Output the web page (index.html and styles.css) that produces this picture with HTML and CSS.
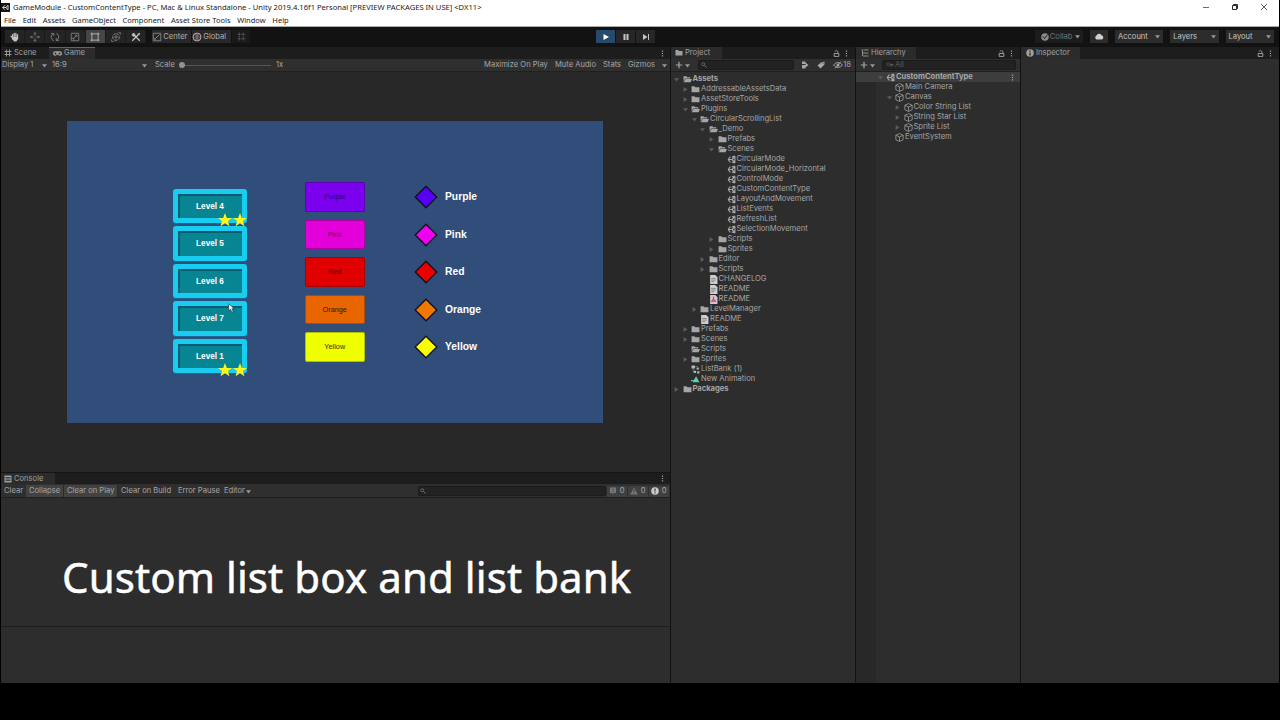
FILE: index.html
```html
<!DOCTYPE html>
<html lang="en">
<head>
  <meta charset="UTF-8" />
  <title>GameModule - CustomContentType</title>
  <link rel="stylesheet" href="styles.css">
</head>
<body>

  <!-- icons -->
  <svg class="defs" width="0" height="0">
    <symbol id="i-folder" viewBox="0 0 16 16"><path d="M1 2h5l2 2h7v9H1z" fill="currentColor"/></symbol>
    <symbol id="i-open" viewBox="0 0 16 16"><path d="M1 11V2h5l1.500 2H13v2H4z M4.500 7H16l-2.500 6H1z" fill="currentColor"/></symbol>
    <symbol id="i-scene" viewBox="0 0 16 16"><path d="M14 2v12M14 2L8.500 3.500M14 14l-5.500-1.500M2 8l4-5M2 8l4 5M2 8h7M9 8l4.500-5M9 8l4.500 5" fill="none" stroke="currentColor" stroke-width="2"/></symbol>
    <symbol id="i-doc" viewBox="0 0 16 16"><path d="M2 0h9l4 4v12H2z" fill="#cfcfcf"/><path d="M4 6h8M4 9h8M4 12h5" stroke="#666" stroke-width="1.200"/></symbol>
    <symbol id="i-pdf" viewBox="0 0 16 16"><path d="M2 0h9l4 4v12H2z" fill="#d8c4ca"/><path d="M8 3v4l-4 5M8 7l4 4H5" fill="none" stroke="#b02548" stroke-width="1.600"/></symbol>
    <symbol id="i-list" viewBox="0 0 16 16"><path d="M1 1h6v5H1zM10 5h4v3h-4zM5 10h4v4H5zM11 11h4v4h-4z" fill="#b8b8b8"/><path d="M4 6v6h3M7 3h5v3" fill="none" stroke="#6fb7a4"/></symbol>
    <symbol id="i-anim" viewBox="0 0 16 16"><path d="M9 2l6 11H3z" fill="#55d6a8"/><path d="M0 10h6" stroke="#55d6a8" stroke-width="2"/></symbol>
    <symbol id="i-cube" viewBox="0 0 16 16"><path d="M8 1l6.500 3v8L8 15l-6.500-3V4zM1.500 4L8 7l6.500-3M8 7v8" fill="none" stroke="currentColor" stroke-width="1.300"/></symbol>
    <symbol id="i-down" viewBox="0 0 8 8"><path d="M0 2h8L4 7z" fill="currentColor"/></symbol>
    <symbol id="i-right" viewBox="0 0 8 8"><path d="M1 0v8l6-4z" fill="currentColor"/></symbol>
    <symbol id="i-lock" viewBox="0 0 12 12"><path d="M3 2.500Q6-.5 8.500 2.500V6" fill="none" stroke="currentColor" stroke-width="1.400"/><path d="M2 6h8v5H2z" fill="none" stroke="currentColor" stroke-width="1.600"/></symbol>
    <symbol id="i-dots" viewBox="0 0 4 12"><path d="M1 1h2v2H1zM1 5h2v2H1zM1 9h2v2H1z" fill="currentColor"/></symbol>
    <symbol id="i-search" viewBox="0 0 12 12"><circle cx="4.500" cy="4.500" r="3" fill="none" stroke="currentColor" stroke-width="1.500"/><path d="M7 7l4 4" stroke="currentColor" stroke-width="2"/></symbol>
    <symbol id="i-plus" viewBox="0 0 10 10"><path d="M5 1v8M1 5h8" stroke="currentColor" stroke-width="1.500"/></symbol>
    <symbol id="i-star" viewBox="0 0 20 20"><path d="M10 0l2.600 7H20l-5.800 4.600L16.300 19 10 14.600 3.700 19l2.100-7.400L0 7h7.400z" fill="#fff51c"/></symbol>
    <symbol id="i-diamond" viewBox="0 0 24 24"><path d="M12 1.200L22.800 12 12 22.800 1.200 12z" fill="currentColor" stroke="#10101c" stroke-width="1.300"/></symbol>
  </svg>

  <div class="window">
    <div class="titlebar">
      <svg class="unity" viewBox="0 0 16 16"><path d="M0 0h16v16H0z" fill="#151515"/><path d="M3 8l4-4M3 8l4 4M3 8h6M9 8l3-4M9 8l3 4M12.500 4v8" stroke="#fff" stroke-width="1.400"/></svg>
      <span class="title">GameModule - CustomContentType - PC, Mac &amp; Linux Standalone - Unity 2019.4.16f1 Personal [PREVIEW PACKAGES IN USE] &lt;DX11&gt;</span>
      <div class="controls">
        <svg viewBox="0 0 8 8"><path d="M1 4.500h6" stroke="#444" stroke-width=".8"/></svg>
        <svg viewBox="0 0 8 8"><path d="M1.500 2.500h4v4h-4zM2.500 2V1.500h4v4H6" fill="none" stroke="#111" stroke-width=".9"/></svg>
        <svg viewBox="0 0 8 8"><path d="M1 1l6 6M7 1L1 7" stroke="#333" stroke-width=".8"/></svg>
      </div>
    </div>
    <div class="menubar">
      <span>File</span><span>Edit</span><span>Assets</span><span>GameObject</span><span>Component</span><span>Asset Store Tools</span><span>Window</span><span>Help</span>
    </div>

    <div class="toolbar">
      <div class="tools">
        <span class="tool"><svg viewBox="0 0 16 16"><path d="M4 9V4M6.700 8V2M9.400 8V2M12 9V4M4 9L1.500 7" stroke="currentColor" stroke-width="2" stroke-linecap="round"/><path d="M3 8h10v3l-3 4H7l-4-4z" fill="currentColor"/></svg></span>
        <span class="tool dim"><svg viewBox="0 0 16 16"><path d="M8 1v5M8 10v5M1 8h5M10 8h5M6 3l2-2 2 2M6 13l2 2 2-2M3 6L1 8l2 2M13 6l2 2-2 2" fill="none" stroke="currentColor" stroke-width="1.300"/></svg></span>
        <span class="tool dim"><svg viewBox="0 0 16 16"><path d="M6 14A6.500 6.500 0 0 1 5 2.500M10 2A6.500 6.500 0 0 1 11 13.500M2 2.500h4v4M14 13.500h-4v-4" fill="none" stroke="currentColor" stroke-width="1.400"/></svg></span>
        <span class="tool dim"><svg viewBox="0 0 16 16"><path d="M2 2h12v12H2zM5 11l6-6M8 5h3v3M2 10h4v4" fill="none" stroke="currentColor" stroke-width="1.300"/></svg></span>
        <span class="tool on"><svg viewBox="0 0 16 16"><path d="M3 1v14M13 1v14M1 3h14M1 13h14" fill="none" stroke="currentColor" stroke-width="1.300"/></svg></span>
        <span class="tool dim"><svg viewBox="0 0 16 16"><circle cx="8" cy="8" r="5.500" fill="none" stroke="currentColor" stroke-width="1.500" stroke-dasharray="5 1.500"/><path d="M8 4v8M4 8h8M12 1h3v3M1 12v3h3" fill="none" stroke="currentColor" stroke-width="1.300"/></svg></span>
        <span class="tool"><svg viewBox="0 0 16 16"><path d="M2 14L14 2M5 5l9 9" stroke="currentColor" stroke-width="2"/><path d="M2 3l3-1 2 3-2 2-3-1zM11 2l3 3" fill="currentColor" stroke="currentColor"/></svg></span>
      </div>
      <div class="pivots">
        <span class="pivot"><svg viewBox="0 0 16 16"><path d="M2 2h12v12H2zM4 12l8-8" fill="none" stroke="#999" stroke-width="1.200"/><circle cx="5" cy="11" r="1.500" fill="#c56"/></svg>Center</span>
        <span class="pivot"><svg viewBox="0 0 16 16"><circle cx="8" cy="8" r="6.300" fill="none" stroke="#bbb" stroke-width="1.500"/><path d="M8 2v12M2 8h12M4 4q4 3 8 0M4 12q4-3 8 0" fill="none" stroke="#a88" stroke-width="1.200"/></svg>Global</span>
        <span class="snap"><svg viewBox="0 0 16 16"><path d="M4 1v14M11 1v14M1 4h14M1 12h14" fill="none" stroke="#777" stroke-width="1.300" stroke-dasharray="2 1"/></svg></span>
      </div>
      <div class="play">
        <span class="active"><svg viewBox="0 0 16 16"><path d="M3 2l11 6-11 6z" fill="#fff"/></svg></span>
        <span><svg viewBox="0 0 16 16"><path d="M3 2h4v12H3zM9 2h4v12H9z" fill="currentColor"/></svg></span>
        <span><svg viewBox="0 0 16 16"><path d="M2 2l9 6-9 6zM12 2h2v12h-2z" fill="currentColor"/></svg></span>
      </div>
      <div class="account">
        <span class="drop collab"><svg class="check" viewBox="0 0 16 16"><circle cx="8" cy="8" r="7.500" fill="#8b8b8b"/><path d="M4 7l3 4 6-8" fill="none" stroke="#222" stroke-width="2"/></svg>Collab<svg class="caret"><use href="#i-down"/></svg></span>
        <span class="drop cloud"><svg viewBox="0 0 20 14"><path d="M5 13a4.500 4.500 0 0 1 0-8 5.500 5.500 0 0 1 10-.5 4.300 4.300 0 0 1 0 8.500z" fill="#d0d0d0"/></svg></span>
        <span class="drop">Account<svg class="caret"><use href="#i-down"/></svg></span>
        <span class="drop">Layers<svg class="caret"><use href="#i-down"/></svg></span>
        <span class="drop">Layout<svg class="caret"><use href="#i-down"/></svg></span>
      </div>
    </div>

    <div class="panels">
      <div class="left">
        <div class="tabs">
          <span class="tab idle"><svg viewBox="0 0 16 16"><path d="M5 1v14M11 1v14M1 5h14M1 11h14" stroke="currentColor" stroke-width="1.800"/></svg>Scene</span>
          <span class="tab game-tab"><svg class="pad" viewBox="0 0 20 14"><path d="M5 2h10a5 5 0 0 1 0 10q-2 0-3-2H8q-1 2-3 2A5 5 0 0 1 5 2z" fill="currentColor"/><circle cx="5.500" cy="7" r="2" fill="#222"/><circle cx="14.500" cy="7" r="2" fill="#222"/></svg>Game</span>
          <span class="tab-icons"><svg class="dots"><use href="#i-dots"/></svg></span>
        </div>
        <div class="bar game-bar">
          <span class="display">Display 1<svg class="caret"><use href="#i-down"/></svg></span>
          <span class="ratio">16:9<svg class="caret"><use href="#i-down"/></svg></span>
          <span class="scale">Scale</span>
          <span class="slider"><i></i></span>
          <span>1x</span>
          <div class="game-opts">
            <span>Maximize On Play</span><span>Mute Audio</span><span>Stats</span><span>Gizmos</span><svg class="caret"><use href="#i-down"/></svg>
          </div>
        </div>
        <div class="game">
          <div class="view">
            <div class="levels">
              <div class="level">Level 4<div class="stars"><svg><use href="#i-star"/></svg><svg><use href="#i-star"/></svg></div></div>
              <div class="level">Level 5</div>
              <div class="level">Level 6</div>
              <div class="level">Level 7
                <svg class="cursor" viewBox="0 0 10 14"><path d="M1 1v10l2.500-2.300L5.500 13l2-1-2-4H9z" fill="#fff" stroke="#123" stroke-width=".8"/></svg>
              </div>
              <div class="level">Level 1<div class="stars"><svg><use href="#i-star"/></svg><svg><use href="#i-star"/></svg></div></div>
            </div>
            <div class="colors">
              <div class="box purple">Purple</div>
              <div class="box pink">Pink</div>
              <div class="box red">Red</div>
              <div class="box orange">Orange</div>
              <div class="box yellow">Yellow</div>
            </div>
            <div class="sprites">
              <div class="sprite"><svg class="c-purple"><use href="#i-diamond"/></svg>Purple</div>
              <div class="sprite"><svg class="c-pink"><use href="#i-diamond"/></svg>Pink</div>
              <div class="sprite"><svg class="c-red"><use href="#i-diamond"/></svg>Red</div>
              <div class="sprite"><svg class="c-orange"><use href="#i-diamond"/></svg>Orange</div>
              <div class="sprite"><svg class="c-yellow"><use href="#i-diamond"/></svg>Yellow</div>
            </div>
          </div>
        </div>
        <div class="tabs console-tabs">
          <span class="tab console-tab"><svg viewBox="0 0 16 16"><path d="M1 1h14v14H1z" fill="currentColor"/><path d="M3 5h10M3 8h10M3 11h10" stroke="#222" stroke-width="1.500"/></svg>Console</span>
          <span class="tab-icons"><svg class="dots"><use href="#i-dots"/></svg></span>
        </div>
        <div class="bar console-bar">
          <span class="cb clear">Clear</span><span class="cb on collapse">Collapse</span><span class="cb on cplay">Clear on Play</span><span class="cb cbuild">Clear on Build</span><span class="cb pause">Error Pause</span><span class="cb editor">Editor<svg class="caret"><use href="#i-down"/></svg></span>
          <div class="search console-search"><svg><use href="#i-search"/></svg></div>
          <span class="count"><svg viewBox="0 0 16 16"><path d="M2 1h12v11H9l-3 3v-3H2z" fill="#777"/><path d="M8 3v4M8 8.500v2" stroke="#444" stroke-width="2"/></svg>0</span>
          <span class="count"><svg viewBox="0 0 16 16"><path d="M8 1l7.500 14H.5z" fill="#777"/><path d="M8 5v5M8 11.500v2" stroke="#444" stroke-width="2"/></svg>0</span>
          <span class="count lit"><svg viewBox="0 0 16 16"><circle cx="8" cy="8" r="7.500" fill="#ccc"/><path d="M8 3v6M8 10.500v2.500" stroke="#333" stroke-width="2.200"/></svg>0</span>
        </div>
        <div class="console">
          <div class="caption">Custom list box and list bank</div>
        </div>
        <div class="detail"></div>
      </div>

      <div class="project">
        <div class="tabs">
          <span class="tab project-tab"><svg><use href="#i-folder"/></svg>Project</span>
          <span class="tab-icons"><svg class="lock"><use href="#i-lock"/></svg><svg class="dots"><use href="#i-dots"/></svg></span>
        </div>
        <div class="bar">
          <svg class="plus"><use href="#i-plus"/></svg><svg class="caret"><use href="#i-down"/></svg>
          <div class="search project-search"><svg><use href="#i-search"/></svg></div>
          <div class="filters">
            <svg viewBox="0 0 16 16"><path d="M2 1h7v5H2zM2 8h7v7H2zM9 3l6 5-6 5z" fill="currentColor"/></svg>
            <svg viewBox="0 0 16 16"><path d="M8 3l7-2v6l-8 8-6-6z" fill="currentColor"/><circle cx="12" cy="4" r="1" fill="#222"/></svg>
            <span class="hidden"><svg viewBox="0 0 20 16"><path d="M1 8q9-10 18 0-9 10-18 0zM4 15L16 1" fill="none" stroke="currentColor" stroke-width="1.800"/><circle cx="10" cy="8" r="3" fill="currentColor"/></svg>18</span>
          </div>
        </div>
        <div class="tree">
          <div class="row d0 bold"><svg class="fold"><use href="#i-down"/></svg><svg><use href="#i-open"/></svg>Assets</div>
          <div class="row d1"><svg class="fold"><use href="#i-right"/></svg><svg><use href="#i-folder"/></svg>AddressableAssetsData</div>
          <div class="row d1"><svg class="fold"><use href="#i-right"/></svg><svg><use href="#i-folder"/></svg>AssetStoreTools</div>
          <div class="row d1"><svg class="fold"><use href="#i-down"/></svg><svg><use href="#i-open"/></svg>Plugins</div>
          <div class="row d2"><svg class="fold"><use href="#i-down"/></svg><svg><use href="#i-open"/></svg>CircularScrollingList</div>
          <div class="row d3"><svg class="fold"><use href="#i-down"/></svg><svg><use href="#i-open"/></svg>_Demo</div>
          <div class="row d4"><svg class="fold"><use href="#i-right"/></svg><svg><use href="#i-folder"/></svg>Prefabs</div>
          <div class="row d4"><svg class="fold"><use href="#i-down"/></svg><svg><use href="#i-open"/></svg>Scenes</div>
          <div class="row d5"><svg class="fold"></svg><svg><use href="#i-scene"/></svg>CircularMode</div>
          <div class="row d5"><svg class="fold"></svg><svg><use href="#i-scene"/></svg>CircularMode_Horizontal</div>
          <div class="row d5"><svg class="fold"></svg><svg><use href="#i-scene"/></svg>ControlMode</div>
          <div class="row d5"><svg class="fold"></svg><svg><use href="#i-scene"/></svg>CustomContentType</div>
          <div class="row d5"><svg class="fold"></svg><svg><use href="#i-scene"/></svg>LayoutAndMovement</div>
          <div class="row d5"><svg class="fold"></svg><svg><use href="#i-scene"/></svg>ListEvents</div>
          <div class="row d5"><svg class="fold"></svg><svg><use href="#i-scene"/></svg>RefreshList</div>
          <div class="row d5"><svg class="fold"></svg><svg><use href="#i-scene"/></svg>SelectionMovement</div>
          <div class="row d4"><svg class="fold"><use href="#i-right"/></svg><svg><use href="#i-folder"/></svg>Scripts</div>
          <div class="row d4"><svg class="fold"><use href="#i-right"/></svg><svg><use href="#i-folder"/></svg>Sprites</div>
          <div class="row d3"><svg class="fold"><use href="#i-right"/></svg><svg><use href="#i-folder"/></svg>Editor</div>
          <div class="row d3"><svg class="fold"><use href="#i-right"/></svg><svg><use href="#i-folder"/></svg>Scripts</div>
          <div class="row d3"><svg class="fold"></svg><svg><use href="#i-doc"/></svg>CHANGELOG</div>
          <div class="row d3"><svg class="fold"></svg><svg><use href="#i-doc"/></svg>README</div>
          <div class="row d3"><svg class="fold"></svg><svg><use href="#i-pdf"/></svg>README</div>
          <div class="row d2"><svg class="fold"><use href="#i-right"/></svg><svg><use href="#i-folder"/></svg>LevelManager</div>
          <div class="row d2"><svg class="fold"></svg><svg><use href="#i-doc"/></svg>README</div>
          <div class="row d1"><svg class="fold"><use href="#i-right"/></svg><svg><use href="#i-folder"/></svg>Prefabs</div>
          <div class="row d1"><svg class="fold"><use href="#i-right"/></svg><svg><use href="#i-folder"/></svg>Scenes</div>
          <div class="row d1"><svg class="fold"></svg><svg><use href="#i-open"/></svg>Scripts</div>
          <div class="row d1"><svg class="fold"><use href="#i-right"/></svg><svg><use href="#i-folder"/></svg>Sprites</div>
          <div class="row d1"><svg class="fold"></svg><svg><use href="#i-list"/></svg>ListBank (1)</div>
          <div class="row d1"><svg class="fold"></svg><svg><use href="#i-anim"/></svg>New Animation</div>
          <div class="row d0 bold"><svg class="fold"><use href="#i-right"/></svg><svg><use href="#i-folder"/></svg>Packages</div>
        </div>
      </div>

      <div class="hierarchy">
        <div class="tabs">
          <span class="tab hierarchy-tab"><svg viewBox="0 0 16 16"><path d="M1 2h4M6 2h9M4 8h11M4 14h11M3 3v11" fill="none" stroke="currentColor" stroke-width="1.700"/></svg>Hierarchy</span>
          <span class="tab-icons"><svg class="lock"><use href="#i-lock"/></svg><svg class="dots"><use href="#i-dots"/></svg></span>
        </div>
        <div class="bar">
          <svg class="plus"><use href="#i-plus"/></svg><svg class="caret"><use href="#i-down"/></svg>
          <div class="search hierarchy-search"><svg viewBox="0 0 18 12"><circle cx="5" cy="4.500" r="3" fill="none" stroke="currentColor" stroke-width="1.500"/><path d="M7 7l4 4M9 4h8l-4 5z" fill="currentColor" stroke="currentColor"/></svg>All</div>
        </div>
        <div class="objects">
          <div class="row scene bold"><svg class="fold"><use href="#i-down"/></svg><svg><use href="#i-scene"/></svg>CustomContentType<svg class="dots"><use href="#i-dots"/></svg></div>
          <div class="row h1"><svg class="fold"></svg><svg><use href="#i-cube"/></svg>Main Camera</div>
          <div class="row h1"><svg class="fold"><use href="#i-down"/></svg><svg><use href="#i-cube"/></svg>Canvas</div>
          <div class="row h2"><svg class="fold"><use href="#i-right"/></svg><svg><use href="#i-cube"/></svg>Color String List</div>
          <div class="row h2"><svg class="fold"><use href="#i-right"/></svg><svg><use href="#i-cube"/></svg>String Star List</div>
          <div class="row h2"><svg class="fold"><use href="#i-right"/></svg><svg><use href="#i-cube"/></svg>Sprite List</div>
          <div class="row h1"><svg class="fold"></svg><svg><use href="#i-cube"/></svg>EventSystem</div>
        </div>
      </div>

      <div class="inspector">
        <div class="tabs">
          <span class="tab inspector-tab"><svg viewBox="0 0 16 16"><circle cx="8" cy="8" r="7.500" fill="currentColor"/><path d="M8 3v2.500M8 7v6" stroke="#222" stroke-width="2.400"/></svg>Inspector</span>
          <span class="tab-icons"><svg class="lock"><use href="#i-lock"/></svg><svg class="dots"><use href="#i-dots"/></svg></span>
        </div>
      </div>
    </div>
  </div>

</body>
</html>
```
FILE: styles.css
```css
* { box-sizing: border-box; margin: 0; padding: 0; }

body {
  width: 1280px; height: 720px; overflow: hidden;
  background: #000; color: #a6a6a6;
  font-family: Inter, sans-serif; font-size: 7.6px; line-height: 10px;
  white-space: nowrap;
}

svg { display: block; flex: none; }
.defs { position: absolute; }

.window { width: 1278px; height: 683px; margin-left: 1px; display: flex; flex-direction: column; }

/* title + menu */
.titlebar {
  height: 14px; display: flex; align-items: center;
  background: #fff; color: #222;
  font-family: "Noto Sans", sans-serif; font-size: 7.6px;
}
.unity { width: 9px; height: 9px; margin-right: 3px; }
.controls { display: flex; gap: 21px; margin-left: auto; padding-right: 11px; }
.controls svg { width: 8px; height: 8px; }

.menubar {
  height: 13px; padding: 1px 0 2px 3px;
  display: flex; gap: 6.7px;
  background: #fff; color: #222; border-bottom: 1px solid #aaa;
  font-family: "Noto Sans", sans-serif; font-size: 7.5px;
}

/* main toolbar */
.toolbar {
  height: 20px; padding-bottom: 1px; display: flex; align-items: center;
  background: #121212; color: #c4c4c4;
}
.tools { display: flex; padding-left: 4px; }
.tool { width: 20.2px; height: 13px; display: flex; align-items: center; justify-content: center; background: #242424; border-right: 1px solid #1a1a1a; }
.tool svg { width: 10px; height: 10px; }
.tool.dim { color: #858585; }
.tool.on { background: #464646; }
.pivots { display: flex; gap: 1px; margin-left: 6px; }
.pivot { height: 13px; width: 39px; display: flex; align-items: center; gap: 1px; background: #282828; color: #b0b0b0; }
.pivot svg { width: 10px; height: 10px; }
.snap { width: 18px; height: 13px; display: flex; align-items: center; justify-content: center; background: #1a1a1a; }
.snap svg { width: 9px; height: 9px; }

.play { display: flex; gap: 1px; margin-left: 346px; }
.play span { width: 19px; height: 13px; display: flex; align-items: center; justify-content: center; background: #262626; }
.play .active { background: #264a6b; }
.play svg { width: 8px; height: 8px; }

.account { display: flex; gap: 6.8px; margin-left: auto; padding-right: 5px; }
.drop { width: 48.5px; height: 13px; display: flex; align-items: center; padding: 0 3px; background: #2c2c2c; color: #c4c4c4; }
.caret { width: 5px; height: 5px; color: #999; }
.drop .caret { margin-left: auto; }
.drop.collab { background: #1c1c1c; color: #757575; padding-left: 6px; gap: 1px; }
.check { width: 8px; height: 8px; }
.drop.cloud { width: 18px; padding: 0 4px; }
.cloud svg { width: 10px; height: 7px; }

/* docked panels */
.panels { flex: 1; display: flex; gap: 1px; background: #111; min-height: 0; }
.left { width: 669px; display: flex; flex-direction: column; }
.project { width: 184px; background: #2d2d2d; }
.hierarchy { width: 164px; background: #2d2d2d; display: flex; flex-direction: column; }
.inspector { flex: 1; background: #2d2d2d; }

.tabs { height: 12px; display: flex; background: #1d1d1d; flex: none; }
.tab { height: 12px; display: flex; align-items: center; gap: 2px; padding-left: 4px; background: #2b2b2b; color: #a0a0a0; }
.tab svg { width: 8px; height: 8px; }
.tab.idle { background: none; width: 48px; padding-left: 3px; }
.game-tab { width: 46px; box-shadow: inset 0 1px #3a6ea5; }
.tab .pad { width: 9px; height: 7px; }
.console-tabs { border-top: 1px solid #151515; }
.console-tab { width: 54px; height: 11px; padding-left: 3px; }
.project-tab { width: 51px; }
.hierarchy-tab { width: 60px; padding-left: 5px; }
.inspector-tab { width: 59px; padding-left: 5px; }
.tab-icons { margin-left: auto; display: flex; align-items: center; gap: 5px; padding-right: 7px; }
.left .tab-icons { padding-right: 6px; }
.lock { width: 7px; height: 7px; }
.dots { width: 3px; height: 7px; }

.bar { height: 13px; display: flex; align-items: center; background: #2f2f2f; border-bottom: 1px solid #202020; flex: none; }

/* game */
.game-bar { padding-left: 1px; }
.display, .ratio { display: flex; align-items: center; justify-content: space-between; }
.display { width: 45px; }
.ratio { width: 95px; margin-left: 5px; }
.scale { margin-left: 8px; width: 24px; }
.slider { width: 92px; height: 1px; margin-right: 5px; background: #555; }
.slider i { display: block; width: 6px; height: 6px; margin-top: -2.5px; border-radius: 50%; background: #929292; }
.game-opts { display: flex; align-items: center; gap: 7px; margin-left: auto; padding-right: 3px; }

.game { height: 400px; padding: 49px 0 0 66px; background: #282828; flex: none; }
.view {
  width: 536px; height: 302px; padding: 61px 0 0 105.5px;
  display: flex; align-items: flex-start;
  background: #314d79;
  color: #fff; font-family: "Liberation Sans", sans-serif;
}
.levels { display: flex; flex-direction: column; gap: 3px; width: 74px; margin: 6.5px 58.5px 0 0; }
.level {
  position: relative; height: 34.5px; padding: 2px 0 0 1px;
  display: flex; align-items: center; justify-content: center;
  border: 5.5px solid #18cdf0; border-radius: 3px;
  background: #078593; box-shadow: inset 2px 2px 0 #0a5a70, 0 1px 1px #1b6b9a;
  font-size: 8.2px; font-weight: bold;
}
.stars { position: absolute; right: -5px; top: 19px; display: flex; gap: 1px; }
.stars svg { width: 14px; height: 14px; }
.cursor { position: absolute; left: 50px; top: -3px; width: 7px; height: 10px; }

.colors { display: flex; flex-direction: column; gap: 8px; width: 59.5px; }
.box {
  height: 29.5px; padding-top: 1px; display: flex; align-items: center; justify-content: center;
  border: 1px solid rgba(0, 0, 0, .25); border-radius: 2px;
  font-size: 7.3px;
}
.purple { background: #7a00ee; color: #35006a; }
.pink { background: #e400da; color: #74006c; }
.red { background: #e00000; color: #690000; }
.orange { background: #e86500; color: #311600; }
.yellow { background: #efff00; color: #333500; }

.sprites { display: flex; flex-direction: column; margin: -3.5px 0 0 49.5px; }
.sprite { height: 37.5px; display: flex; align-items: center; gap: 7px; font-size: 10.3px; font-weight: bold; }
.sprite svg { width: 24px; height: 24px; }
.c-purple { color: #5800f5; }
.c-pink { color: #ee00f0; }
.c-red { color: #e90000; }
.c-orange { color: #f07800; }
.c-yellow { color: #f7ff00; }

/* console */
.console-bar { height: 14px; padding: 1px 1px 0 1px; }
.cb { height: 12px; line-height: 12px; padding-left: 3px; }
.cb.on { background: #424242; border-right: 1px solid #2a2a2a; }
.clear { width: 24px; padding-left: 2px; }
.collapse { width: 38px; }
.cplay { width: 54px; }
.cbuild { width: 57px; }
.pause { width: 46px; }
.editor { display: flex; align-items: center; gap: 1px; }
.search { height: 10px; display: flex; align-items: center; background: #222; border: 1px solid #1b1b1b; border-radius: 2px; color: #777; }
.search svg { width: 6px; height: 6px; }
.console-search { width: 188px; margin-left: auto; padding-left: 1px; }
.count { width: 20px; height: 11px; margin-left: 1px; display: flex; align-items: center; justify-content: space-evenly; background: #404040; }
.count svg { width: 8px; height: 8px; }
.console { height: 129px; background: #2d2d2d; border-bottom: 1px solid #1c1c1c; flex: none; }
.caption {
  padding: 49px 0 0 61px;
  color: #fff; font-family: "Noto Sans", sans-serif; font-size: 42px; line-height: 60px;
  letter-spacing: .09px; -webkit-text-stroke: .5px #fff;
}
.detail { flex: 1; background: #2d2d2d; }

/* project + hierarchy */
.plus { width: 8px; height: 8px; margin: 0 2px 0 4px; }
.project-search { width: 96px; margin-left: 8px; padding-left: 2px; }
.filters { display: flex; align-items: center; gap: 8px; margin-left: auto; padding-right: 4px; }
.filters svg { width: 8px; height: 8px; }
.hidden { display: flex; align-items: center; }
.hidden svg { width: 10px; }

.tree { padding-top: 2px; }
.row { height: 10px; display: flex; align-items: center; }
.row svg { width: 9px; height: 9px; margin-right: 1px; }
.row .fold { width: 5px; height: 5px; margin-right: 3.5px; color: #5c5c5c; }
.bold { font-weight: bold; }
.d0 { padding-left: 3px; }
.d1 { padding-left: 11.5px; }
.d2 { padding-left: 20.5px; }
.d3 { padding-left: 29px; }
.d4 { padding-left: 38px; }
.d5 { padding-left: 47px; }

.hierarchy-search { width: 134px; margin-left: 7px; padding-left: 3px; gap: 1px; color: #5c5c5c; }
.hierarchy-search svg { width: 8px; }
.objects { flex: 1; border-left: 20px solid #282828; }
.scene { margin-left: -20px; padding-left: 21.5px; background: #3d3d3d; }
.row .dots { width: 3px; height: 7px; margin: 0 6px 0 auto; }
.h1 { padding-left: 10.5px; }
.h2 { padding-left: 19px; }
```
